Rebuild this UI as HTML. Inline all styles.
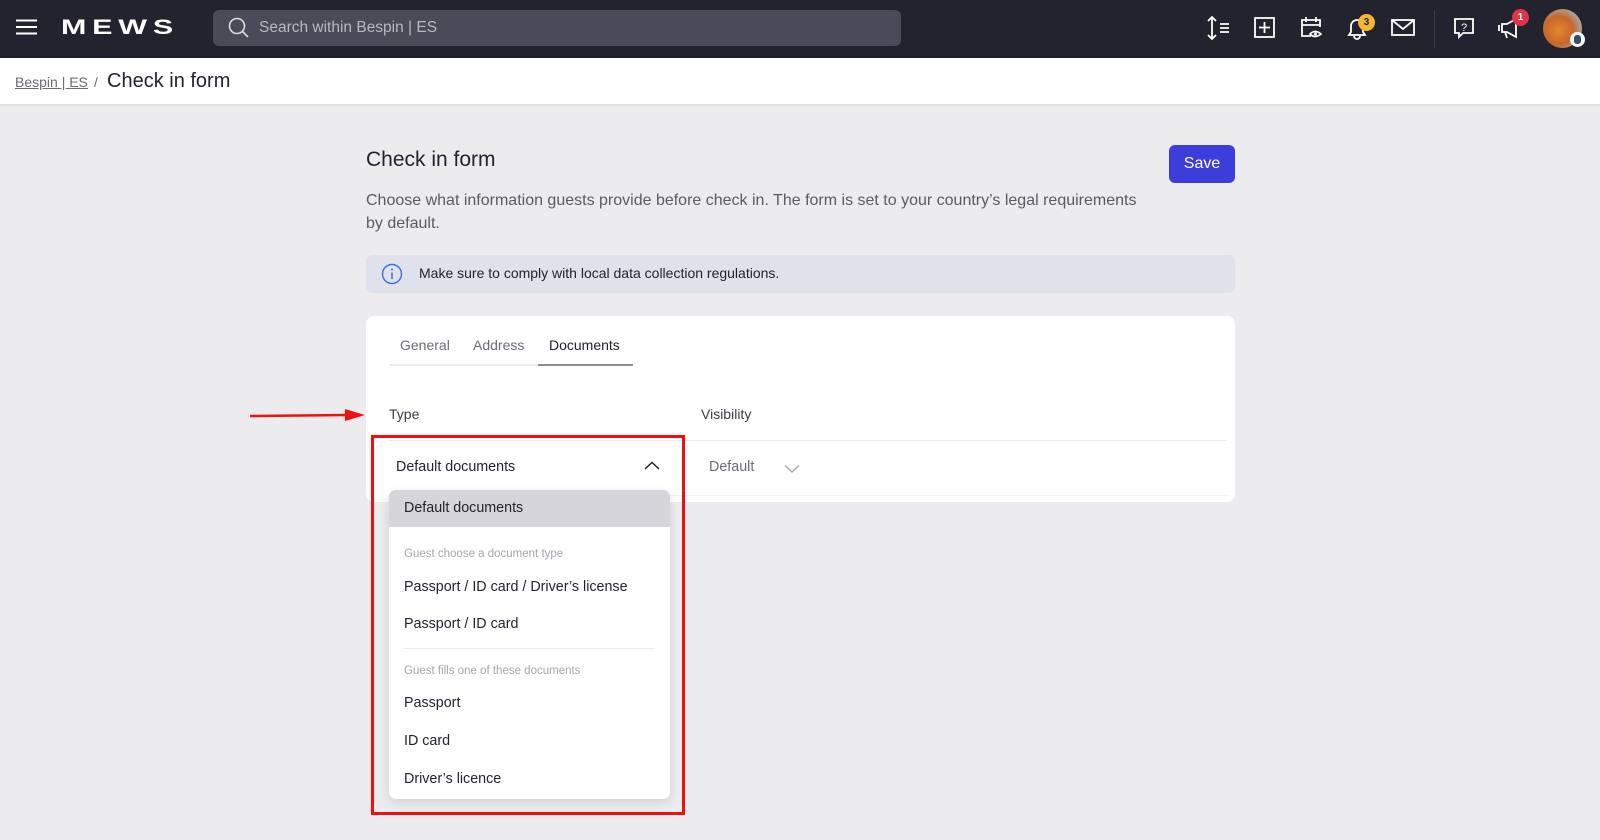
<!DOCTYPE html>
<html><head><meta charset="utf-8"><style>
*{box-sizing:border-box;margin:0;padding:0}
body{width:1600px;height:840px;background:#ececee;font-family:"Liberation Sans",sans-serif;color:#23232f;position:relative;overflow:hidden}
.a{position:absolute;white-space:nowrap}
.hdr{position:absolute;left:0;top:0;width:1600px;height:58px;background:#23232f}
.bc{position:absolute;left:0;top:58px;width:1600px;height:46px;background:#fff;box-shadow:0 1px 3px rgba(0,0,0,.08)}
.ic{position:absolute;top:14px}
.ic svg{display:block}
.dd .it{position:absolute;left:15px;font-size:14.3px;color:#23232f}
.dd .gr{position:absolute;left:15px;font-size:11.5px;color:#a5a5ad}
</style></head><body>
<div class="hdr"></div>
<svg class="a" style="left:16px;top:19px" width="21" height="16"><path d="M0 1.5H21M0 8H21M0 14.5H21" stroke="#fff" stroke-width="2"/></svg>
<div class="a" style="left:61px;top:16px;font-size:21px;font-weight:bold;color:#fff;letter-spacing:4px;transform:scaleX(1.45);transform-origin:0 0">MEWS</div>
<div class="a" style="left:213px;top:10px;width:688px;height:36px;background:#4a4a58;border-radius:6px"></div>
<svg class="a" style="left:228px;top:17px" width="22" height="22"><circle cx="9" cy="9" r="7.5" stroke="#ddd" stroke-width="1.6" fill="none"/><path d="M14.5 14.5L20 20" stroke="#ddd" stroke-width="1.6"/></svg>
<div class="a" style="left:259px;top:19px;font-size:15.5px;color:#b8b8c0">Search within Bespin | ES</div>

<div class="ic" style="left:1207px"><svg width="24" height="28"><path d="M5 3V25M1 7L5 3L9 7M1 21L5 25L9 21M13 10H22M13 14H22M13 18H22" stroke="#fff" stroke-width="1.8" fill="none"/></svg></div>
<div class="ic" style="left:1253px"><svg width="24" height="28"><rect x="2" y="4" width="19" height="19" stroke="#fff" stroke-width="1.8" fill="none"/><path d="M11.5 8V19M6 13.5H17" stroke="#fff" stroke-width="1.8"/></svg></div>
<div class="ic" style="left:1299px"><svg width="24" height="28"><path d="M12 22H3V6H21V13M3 11H21M7 3V8M17 3V8" stroke="#fff" stroke-width="1.8" fill="none"/><path d="M11 20Q16 15 22 20Q16 25 11 20Z" stroke="#fff" stroke-width="1.6" fill="none"/><circle cx="16.5" cy="20" r="1.5" fill="#fff"/></svg></div>
<div class="ic" style="left:1345px"><svg width="24" height="28"><path d="M4 21H20L18 18V12A6 6 0 0 0 6 12V18Z M9 22A3 3 0 0 0 15 22" stroke="#fff" stroke-width="1.8" fill="none"/></svg></div>
<div class="a" style="left:1358px;top:14px;width:17px;height:17px;border-radius:50%;background:#f5b731;font-size:10px;font-weight:bold;text-align:center;line-height:17px;color:#23232f">3</div>
<div class="ic" style="left:1390px"><svg width="26" height="28"><rect x="2" y="6" width="22" height="15" stroke="#fff" stroke-width="1.8" fill="none"/><path d="M2 6L13 15L24 6" stroke="#fff" stroke-width="1.8" fill="none"/></svg></div>
<div class="a" style="left:1434px;top:10px;width:1px;height:38px;background:#3c3c48"></div>
<div class="ic" style="left:1452px"><svg width="24" height="28"><path d="M3 5H21V19H11L7 23V19H3Z" stroke="#fff" stroke-width="1.8" fill="none"/><text x="9" y="17" fill="#fff" font-size="11" font-family="Liberation Sans">?</text></svg></div>
<div class="ic" style="left:1497px"><svg width="26" height="28"><path d="M5 10H10L19 5V23L10 18H5Z M2 11V17 M8 18L10 24" stroke="#fff" stroke-width="1.8" fill="none"/></svg></div>
<div class="a" style="left:1512px;top:9px;width:17px;height:17px;border-radius:50%;background:#e0344a;font-size:10px;font-weight:bold;text-align:center;line-height:17px;color:#fff">1</div>
<div class="a" style="left:1543px;top:9px;width:39px;height:39px;border-radius:50%;background:radial-gradient(circle at 40% 55%,#e6862f,#c8672a 45%,#a9a6a6 75%)"></div>
<div class="a" style="left:1570px;top:32px;width:15px;height:15px;border-radius:50%;background:#fff"></div>
<div class="a" style="left:1574px;top:35px;width:7px;height:9px;border-radius:3px;background:#3b4b66"></div>

<div class="bc"></div>
<div class="a" style="left:15px;top:74px;font-size:14px;color:#6b6b75;text-decoration:underline">Bespin | ES</div>
<div class="a" style="left:94px;top:74px;font-size:14px;color:#6b6b75">/</div>
<div class="a" style="left:107px;top:70px;font-size:20px;color:#23232f">Check in form</div>

<div class="a" style="left:366px;top:148px;font-size:21px">Check in form</div>
<div class="a" style="left:1169px;top:145px;width:66px;height:38px;background:#3d3ddb;border-radius:6px;color:#fff;font-size:16px;text-align:center;line-height:38px">Save</div>
<div class="a" style="left:366px;top:189px;font-size:16px;color:#5a5a64;line-height:23px;white-space:normal;width:780px">Choose what information guests provide before check in. The form is set to your country’s legal requirements by default.</div>
<div class="a" style="left:366px;top:255px;width:869px;height:38px;background:#dfe2ea;border-radius:6px"></div>
<svg class="a" style="left:381px;top:263px" width="22" height="22"><circle cx="11" cy="11" r="9.5" stroke="#3a6fd8" stroke-width="1.4" fill="none"/><path d="M11 9.5V16" stroke="#3a6fd8" stroke-width="1.5"/><circle cx="11" cy="6.5" r="1" fill="#3a6fd8"/></svg>
<div class="a" style="left:419px;top:265px;font-size:14px;color:#23232f">Make sure to comply with local data collection regulations.</div>

<div class="a" style="left:366px;top:316px;width:869px;height:186px;background:#fff;border-radius:8px"></div>
<div class="a" style="left:400px;top:337px;font-size:14px;color:#6b6b75">General</div>
<div class="a" style="left:473px;top:337px;font-size:14px;color:#6b6b75">Address</div>
<div class="a" style="left:549px;top:337px;font-size:14px;color:#23232f">Documents</div>
<div class="a" style="left:389px;top:364px;width:244px;height:2px;background:#ececee"></div>
<div class="a" style="left:538px;top:364px;width:95px;height:2px;background:#8c8c94"></div>
<div class="a" style="left:389px;top:406px;font-size:14px;color:#3c3c46">Type</div>
<div class="a" style="left:701px;top:406px;font-size:14px;color:#3c3c46">Visibility</div>
<div class="a" style="left:389px;top:440px;width:838px;height:1px;background:#ececee"></div>
<div class="a" style="left:389px;top:495px;width:838px;height:1px;background:#f0f0f2"></div>
<div class="a" style="left:396px;top:459px;font-size:14.3px;color:#23232f">Default documents</div>
<svg class="a" style="left:644px;top:461px" width="16" height="10"><path d="M1 8L8 1.5L15 8" stroke="#23232f" stroke-width="1.5" fill="none"/></svg>
<div class="a" style="left:709px;top:459px;font-size:14.3px;color:#6b6b75">Default</div>
<svg class="a" style="left:784px;top:464px" width="16" height="10"><path d="M1 1.5L8 8L15 1.5" stroke="#a5a5ad" stroke-width="1.3" fill="none"/></svg>

<div class="a dd" style="left:389px;top:490px;width:281px;height:309px;background:#fff;border-radius:7px;box-shadow:0 3px 10px rgba(0,0,0,.12);overflow:hidden">
<div style="position:absolute;left:0;top:0;width:281px;height:37px;background:#d5d5da"></div>
<div class="it" style="top:10px">Default documents</div>
<div class="gr" style="top:58px">Guest choose a document type</div>
<div class="it" style="top:89px">Passport / ID card / Driver’s license</div>
<div class="it" style="top:126px">Passport / ID card</div>
<div style="position:absolute;left:15px;top:158px;width:251px;height:1px;background:#ececee"></div>
<div class="gr" style="top:175px">Guest fills one of these documents</div>
<div class="it" style="top:205px">Passport</div>
<div class="it" style="top:243px">ID card</div>
<div class="it" style="top:281px">Driver’s licence</div>
</div>

<div class="a" style="left:371px;top:435px;width:314px;height:380px;border:3px solid #f50d0d"></div>
<svg class="a" style="left:248px;top:407px" width="120" height="16"><path d="M2 9L100 8" stroke="#f01010" stroke-width="2.5"/><path d="M97 2L117 8L97 14Z" fill="#f01010"/></svg>
</body></html>
